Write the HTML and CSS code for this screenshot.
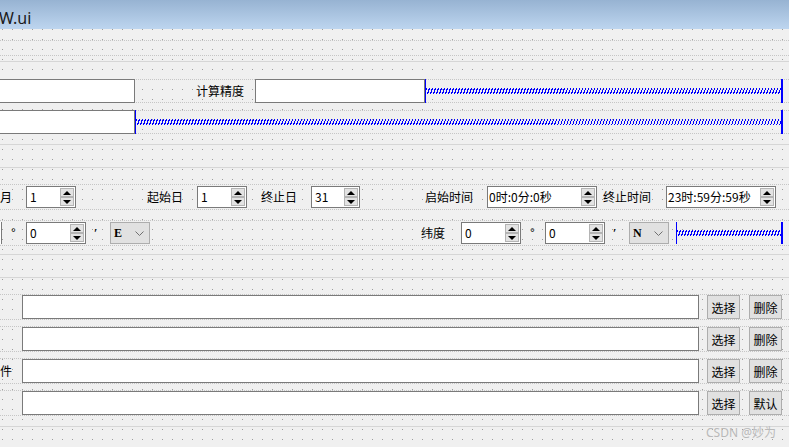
FILE: index.html
```html
<!DOCTYPE html>
<html lang="zh-CN">
<head>
  <meta charset="UTF-8" />
  <title>W.ui</title>
  <link rel="stylesheet" href="styles.css">
</head>
<body>

  <div class="titlebar"><span class="title">W.ui</span></div>

  <div class="canvas">
    <div class="layout-top"></div>

    <!-- calculation settings -->
    <div class="group group-calc">
      <div class="row row-edit">
        <div class="lineedit lineedit-short"></div>
        <span class="label label-precision">计算精度</span>
        <div class="lineedit lineedit-precision"></div>
        <div class="spacer spacer-precision"><div class="zigzag"></div></div>
      </div>
      <div class="row row-edit row-second">
        <div class="lineedit lineedit-short"></div>
        <div class="spacer spacer-wide"><div class="zigzag"></div></div>
      </div>
    </div>

    <!-- date / time / position -->
    <div class="group group-time">
      <div class="row row-spin">
        <span class="label label-month">月</span>
        <div class="spinbox spin-month"><span class="spin-text">1</span><div class="spin-buttons"><span class="spin-up"></span><span class="spin-down"></span></div></div>
        <span class="label label-startday">起始日</span>
        <div class="spinbox spin-startday"><span class="spin-text">1</span><div class="spin-buttons"><span class="spin-up"></span><span class="spin-down"></span></div></div>
        <span class="label label-endday">终止日</span>
        <div class="spinbox spin-endday"><span class="spin-text">31</span><div class="spin-buttons"><span class="spin-up"></span><span class="spin-down"></span></div></div>
        <span class="label label-starttime">启始时间</span>
        <div class="spinbox spin-time"><span class="spin-text">0时:0分:0秒</span><div class="spin-buttons"><span class="spin-up"></span><span class="spin-down"></span></div></div>
        <span class="label label-endtime">终止时间</span>
        <div class="spinbox spin-time spin-endtime"><span class="spin-text">23时:59分:59秒</span><div class="spin-buttons"><span class="spin-up"></span><span class="spin-down"></span></div></div>
      </div>

      <div class="row row-spin row-coord">
        <div class="stub"></div>
        <span class="label label-deg">°</span>
        <div class="spinbox spin-coord"><span class="spin-text">0</span><div class="spin-buttons"><span class="spin-up"></span><span class="spin-down"></span></div></div>
        <span class="label label-min">′</span>
        <div class="combo"><span class="combo-text">E</span>
          <svg class="chevron" width="9" height="5" viewBox="0 0 9 5"><polyline points="0.5,0.5 4.5,4.5 8.5,0.5" fill="none" stroke="#707070" stroke-width="1"/></svg>
        </div>
        <span class="label label-lat">纬度</span>
        <div class="spinbox spin-coord"><span class="spin-text">0</span><div class="spin-buttons"><span class="spin-up"></span><span class="spin-down"></span></div></div>
        <span class="label label-deg label-deg2">°</span>
        <div class="spinbox spin-coord"><span class="spin-text">0</span><div class="spin-buttons"><span class="spin-up"></span><span class="spin-down"></span></div></div>
        <span class="label label-min">′</span>
        <div class="combo"><span class="combo-text">N</span>
          <svg class="chevron" width="9" height="5" viewBox="0 0 9 5"><polyline points="0.5,0.5 4.5,4.5 8.5,0.5" fill="none" stroke="#707070" stroke-width="1"/></svg>
        </div>
        <div class="spacer spacer-coord"><div class="zigzag"></div></div>
      </div>
    </div>

    <!-- file paths -->
    <div class="group group-files">
      <div class="row row-file">
        <span class="label label-file"></span>
        <div class="lineedit lineedit-file"></div>
        <button class="button button-pick">选择</button>
        <button class="button">删除</button>
      </div>
      <div class="row row-file">
        <span class="label label-file"></span>
        <div class="lineedit lineedit-file"></div>
        <button class="button button-pick">选择</button>
        <button class="button">删除</button>
      </div>
      <div class="row row-file">
        <span class="label label-file">件</span>
        <div class="lineedit lineedit-file"></div>
        <button class="button button-pick">选择</button>
        <button class="button">删除</button>
      </div>
      <div class="row row-file">
        <span class="label label-file"></span>
        <div class="lineedit lineedit-file"></div>
        <button class="button button-pick">选择</button>
        <button class="button">默认</button>
      </div>
    </div>
  </div>

  <div class="watermark">CSDN @妙为</div>

</body>
</html>
```

FILE: styles.css
```css
html, body {
  margin: 0;
  padding: 0;
}

body {
  width: 789px;
  height: 447px;
  overflow: hidden;
  position: relative;
  background: #f0f0f0;
  font-family: "Noto Sans CJK SC", "Noto Sans", sans-serif;
  font-size: 12px;
  color: #000000;
}

.titlebar {
  height: 29px;
  background: linear-gradient(to bottom, #97b3d2, #bdd5ef);
  display: flex;
  align-items: center;
}

.title {
  font-family: "Noto Sans", sans-serif;
  font-size: 16px;
  color: #1a1a1a;
  margin-left: -1px;
  margin-top: 7px;
}

/* designer grid: one dot every 10px */
.canvas {
  height: 418px;
  background-color: #f0f0f0;
  background-image:
    linear-gradient(to bottom, transparent 1px, #f0f0f0 1px),
    linear-gradient(to right, #9c9c9c 1px, #f0f0f0 1px);
  background-size: 10px 10px, 10px 10px;
  background-position: 2px 0, 2px 0;
  overflow: hidden;
}

.layout-top {
  margin-top: 11px;
  height: 14px;
  border-top: 1px dotted #c6c6c6;
  border-bottom: 1px dotted #c6c6c6;
}

.group {
  border-top: 1px solid #d6d6d6;
  border-bottom: 1px solid #d6d6d6;
}

.group-calc {
  margin-top: 5px;
  padding: 17px 0 10px;
}

.group-time {
  margin-top: 22px;
  padding: 16px 0 8px;
}

.group-files {
  margin-top: 22px;
  padding: 16px 0 10px;
}

.row {
  display: flex;
  align-items: center;
  border-top: 1px dotted #c6c6c6;
  border-bottom: 1px dotted #c6c6c6;
}

.row-edit {
  height: 22px;
}

.row-edit > .lineedit,
.row-edit > .spacer {
  margin: -1px 0;
}

.row-second {
  margin-top: 7px;
}

.row-spin {
  height: 22px;
  padding: 1px 0;
}

.row-coord {
  margin-top: 10px;
}

.row-file {
  height: 24px;
}

.row-file + .row-file {
  margin-top: 6px;
}

.label {
  flex: none;
  white-space: nowrap;
  line-height: 16px;
}

.lineedit {
  flex: none;
  box-sizing: border-box;
  height: 24px;
  background: #ffffff;
  border: 1px solid #7a7a7a;
}

.lineedit-short {
  width: 145px;
  margin-left: -10px !important;
}

.label-precision {
  width: 48px;
  margin-left: 61px;
}

.lineedit-precision {
  width: 170px;
  margin-left: 11px !important;
}

/* spacers */
.spacer {
  flex: none;
  box-sizing: border-box;
  height: 24px;
  border-left: 1px solid #0000ff;
  border-right: 2px solid #0000ff;
  display: flex;
  align-items: center;
}

.zigzag {
  flex: 1;
  height: 6px;
  background: repeating-linear-gradient(110deg, #0000ff 0 1.1px, transparent 1.1px 2.82px);
}

.spacer-precision {
  width: 358px;
}

.spacer-wide {
  width: 648px;
}

.spacer-coord {
  width: 107px;
  height: 22px;
  margin-left: 7px;
}

/* spin boxes */
.spinbox {
  flex: none;
  box-sizing: border-box;
  height: 22px;
  display: flex;
  align-items: center;
  background: #ffffff;
  border: 1px solid #7a7a7a;
  padding: 0 1px 0 3px;
}

.spin-text {
  flex: 1;
  white-space: nowrap;
  overflow: hidden;
  line-height: 16px;
}

.spin-buttons {
  flex: none;
  width: 14px;
  height: 18px;
  display: flex;
  flex-direction: column;
}

.spin-up,
.spin-down {
  flex: 1;
  box-sizing: border-box;
  background: #e3e3e3;
  border: 1px solid #b4b4b4;
  display: flex;
  align-items: center;
  justify-content: center;
}

.spin-up::before {
  content: "";
  border-left: 4px solid transparent;
  border-right: 4px solid transparent;
  border-bottom: 4px solid #000000;
}

.spin-down::before {
  content: "";
  border-left: 4px solid transparent;
  border-right: 4px solid transparent;
  border-top: 4px solid #000000;
}

.label-month {
  width: 14px;
}

.spin-month {
  width: 50px;
  margin-left: 12px;
}

.label-startday {
  width: 36px;
  margin-left: 71px;
}

.spin-startday {
  width: 50px;
  margin-left: 14px;
}

.label-endday {
  width: 36px;
  margin-left: 14px;
}

.spin-endday {
  width: 49px;
  margin-left: 14px;
}

.label-starttime {
  width: 48px;
  margin-left: 65px;
}

.spin-time {
  width: 110px;
  margin-left: 14px;
  padding-left: 1px;
}

.label-endtime {
  width: 48px;
  margin-left: 6px;
}

.spin-endtime {
  margin-left: 15px;
}

/* coordinates row */
.stub {
  flex: none;
  width: 1px;
  height: 22px;
  background: #ffffff;
  border-right: 1px solid #7a7a7a;
}

.label-deg {
  width: 15px;
  margin-left: 9px;
  font-family: "Liberation Sans", sans-serif;
}

.label-deg2 {
  margin-left: 9px;
}

.spin-coord {
  width: 60px;
}

.label-min {
  width: 16px;
  margin-left: 8px;
  font-family: "Liberation Serif", serif;
  font-weight: bold;
}

.combo {
  flex: none;
  box-sizing: border-box;
  width: 40px;
  height: 22px;
  display: flex;
  align-items: center;
  background: #e1e1e1;
  border: 1px solid #adadad;
  padding: 0 5px 0 3px;
}

.combo-text {
  flex: 1;
  font-family: "Liberation Serif", serif;
  font-weight: bold;
  font-size: 12px;
}

.chevron {
  display: block;
}

.label-lat {
  width: 26px;
  margin-left: 271px;
}

.label-lat + .spin-coord {
  margin-left: 14px;
}

/* file rows */
.label-file {
  width: 12px;
}

.lineedit-file {
  width: 677px;
  margin: -1px 0 -1px 10px;
}

.button {
  flex: none;
  box-sizing: border-box;
  width: 33px;
  height: 24px;
  margin: -1px 0 -1px 9px;
  padding: 0;
  background: #e1e1e1;
  border: 1px solid #adadad;
  font-family: "Noto Sans CJK SC", sans-serif;
  font-size: 12px;
  color: #000000;
}

.button-pick {
  margin-left: 8px;
}

.watermark {
  position: absolute;
  right: 13px;
  bottom: 6px;
  font-family: "Noto Sans", "Noto Sans CJK SC", sans-serif;
  font-size: 12px;
  color: #b9b9b9;
}
```
